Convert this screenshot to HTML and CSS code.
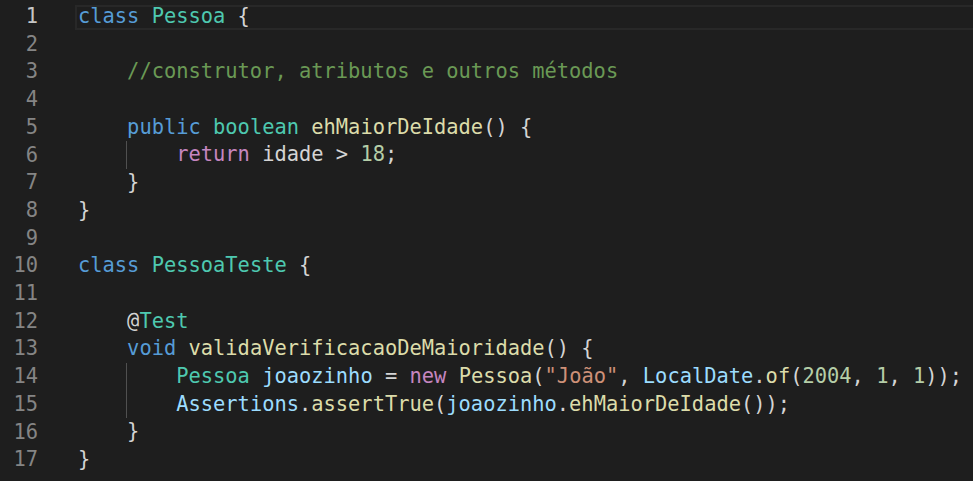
FILE: index.html
```html
<!DOCTYPE html>
<html lang="pt-BR">
  <head>
    <meta charset="UTF-8" />
    <meta name="viewport" content="width=device-width, initial-scale=1.0" />
    <title>Pessoa.java</title>
    <link rel="stylesheet" href="styles.css">
  </head>
  <body>
    <div class="editor">
      <div class="gutter">
        <div class="num active">1</div>
        <div class="num">2</div>
        <div class="num">3</div>
        <div class="num">4</div>
        <div class="num">5</div>
        <div class="num">6</div>
        <div class="num">7</div>
        <div class="num">8</div>
        <div class="num">9</div>
        <div class="num">10</div>
        <div class="num">11</div>
        <div class="num">12</div>
        <div class="num">13</div>
        <div class="num">14</div>
        <div class="num">15</div>
        <div class="num">16</div>
        <div class="num">17</div>
      </div>
      <div class="code">
        <div class="line current"><span class="kw">class</span> <span class="type">Pessoa</span> {</div>
        <div class="line g1"> </div>
        <div class="line g1">    <span class="cmt">//construtor, atributos e outros métodos</span></div>
        <div class="line g1"> </div>
        <div class="line g1">    <span class="kw">public</span> <span class="type">boolean</span> <span class="fn">ehMaiorDeIdade</span>() {</div>
        <div class="line g2">        <span class="ctl">return</span> idade &gt; <span class="num-lit">18</span>;</div>
        <div class="line g1">    }</div>
        <div class="line">}</div>
        <div class="line"> </div>
        <div class="line"><span class="kw">class</span> <span class="type">PessoaTeste</span> {</div>
        <div class="line g1"> </div>
        <div class="line g1">    @<span class="type">Test</span></div>
        <div class="line g1">    <span class="kw">void</span> <span class="fn">validaVerificacaoDeMaioridade</span>() {</div>
        <div class="line g2">        <span class="type">Pessoa</span> <span class="var">joaozinho</span> = <span class="ctl">new</span> <span class="fn">Pessoa</span>(<span class="str">"João"</span>, <span class="var">LocalDate</span>.<span class="fn">of</span>(<span class="num-lit">2004</span>, <span class="num-lit">1</span>, <span class="num-lit">1</span>));</div>
        <div class="line g2">        <span class="var">Assertions</span>.<span class="fn">assertTrue</span>(<span class="var">joaozinho</span>.<span class="fn">ehMaiorDeIdade</span>());</div>
        <div class="line g1">    }</div>
        <div class="line">}</div>
      </div>
    </div>
  </body>
</html>
```

FILE: styles.css
```css
* {
  margin: 0;
  padding: 0;
  box-sizing: border-box;
}

html,
body {
  height: 100%;
  width: 100%;
}

body {
  background: #1e1e1e;
  overflow: hidden;
}

.editor {
  display: flex;
  padding-top: 3px;
  font-family: "DejaVu Sans Mono", monospace;
  font-size: 20.4px;
  line-height: 27.7px;
  color: #d4d4d4;
}

.gutter {
  width: 38px;
  text-align: right;
  color: #858585;
}

.num.active {
  color: #c6c6c6;
}

.code {
  flex: 1;
  margin-left: 40px;
}

.line {
  white-space: pre;
  height: 27.7px;
  position: relative;
}

/* indent guides */
.g1 {
  background: linear-gradient(#404040, #404040) no-repeat -1px 0 / 1px 100%;
}

.g2 {
  background:
    linear-gradient(#404040, #404040) no-repeat -1px 0 / 1px 100%,
    linear-gradient(#505050, #505050) no-repeat calc(4ch - 1px) 0 / 1px 100%;
}

/* current line box */
.current::before {
  content: "";
  position: absolute;
  left: -3px;
  right: 0;
  top: 2px;
  bottom: 1px;
  border: 2px solid #282828;
  border-right: none;
}

.kw {
  color: #569cd6;
}

.type {
  color: #4ec9b0;
}

.fn {
  color: #dcdcaa;
}

.var {
  color: #9cdcfe;
}

.ctl {
  color: #c586c0;
}

.num-lit {
  color: #b5cea8;
}

.str {
  color: #ce9178;
}

.cmt {
  color: #6a9955;
}
```
